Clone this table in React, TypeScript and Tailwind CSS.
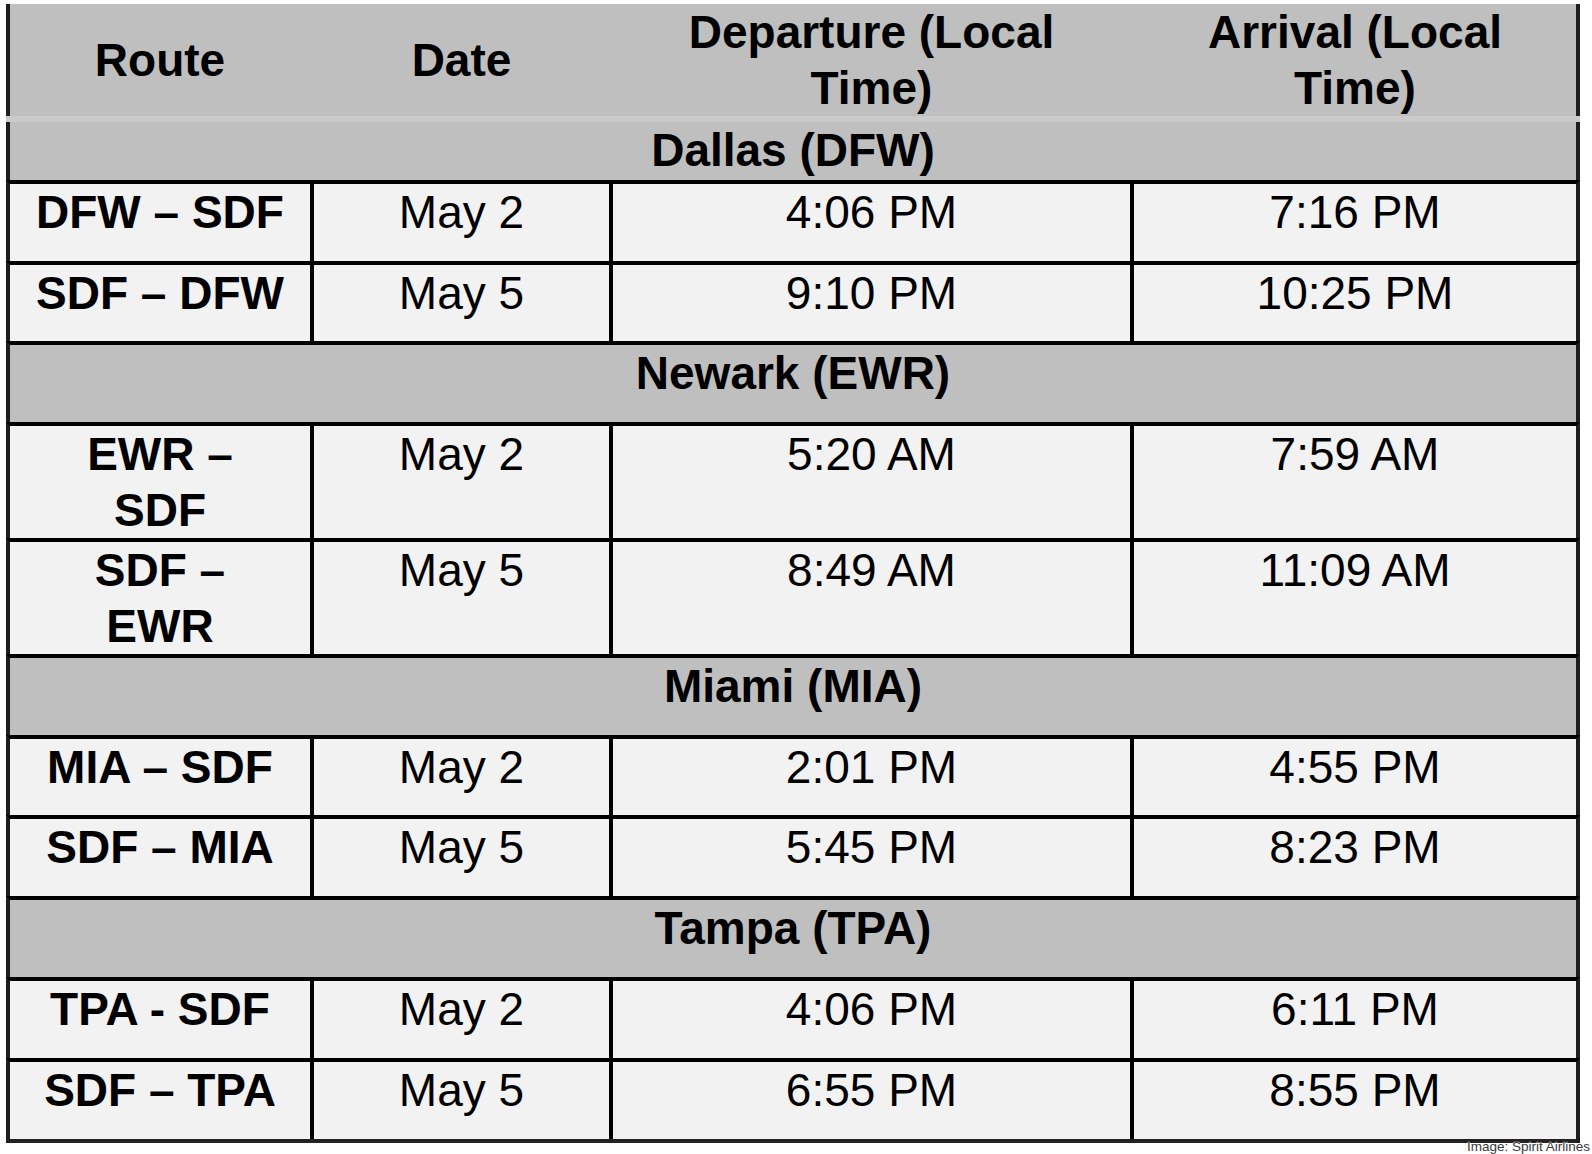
const rows: (
  | { kind: "group"; label: string; h: string }
  | { kind: "flight"; route: React.ReactNode; date: string; dep: string; arr: string; h: string }
)[] = [
  { kind: "flight", route: "DFW – SDF", date: "May 2", dep: "4:06 PM", arr: "7:16 PM", h: "h-[81px]" },
  { kind: "flight", route: "SDF – DFW", date: "May 5", dep: "9:10 PM", arr: "10:25 PM", h: "h-[80px]" },
  { kind: "group", label: "Newark (EWR)", h: "h-[81px]" },
  {
    kind: "flight",
    route: (
      <>
        EWR –<br />
        SDF
      </>
    ),
    date: "May 2",
    dep: "5:20 AM",
    arr: "7:59 AM",
    h: "h-[116px]",
  },
  {
    kind: "flight",
    route: (
      <>
        SDF –<br />
        EWR
      </>
    ),
    date: "May 5",
    dep: "8:49 AM",
    arr: "11:09 AM",
    h: "h-[116px]",
  },
  { kind: "group", label: "Miami (MIA)", h: "h-[81px]" },
  { kind: "flight", route: "MIA – SDF", date: "May 2", dep: "2:01 PM", arr: "4:55 PM", h: "h-[80px]" },
  { kind: "flight", route: "SDF – MIA", date: "May 5", dep: "5:45 PM", arr: "8:23 PM", h: "h-[81px]" },
  { kind: "group", label: "Tampa (TPA)", h: "h-[81px]" },
  { kind: "flight", route: "TPA - SDF", date: "May 2", dep: "4:06 PM", arr: "6:11 PM", h: "h-[81px]" },
  { kind: "flight", route: "SDF – TPA", date: "May 5", dep: "6:55 PM", arr: "8:55 PM", h: "h-[81px]" },
];

const cols = "grid grid-cols-[300px_295px_517px_442px] gap-x-[4px]";

export default function App() {
  return (
    <div className="relative w-[1592px] h-[1154px] bg-white text-black font-['Liberation_Sans',Arial,sans-serif] text-[46px] leading-[56px]">
      <div className="pt-[4px] pl-[6px] w-[1580px]">
        {/* header */}
        <div className={`${cols} h-[112px] bg-[#bfbfbf] border-x-4 border-[#1e1e1e] font-bold text-center`}>
          <div className="flex items-center justify-center">Route</div>
          <div className="flex items-center justify-center">Date</div>
          <div className="flex items-center justify-center">
            <span>
              Departure (Local
              <br />
              Time)
            </span>
          </div>
          <div className="flex items-center justify-center">
            <span>
              Arrival (Local
              <br />
              Time)
            </span>
          </div>
        </div>
        <div className="h-[6px] bg-[#cacaca]" />
        <div className="h-[58px] bg-[#bfbfbf] border-x-4 border-[#1e1e1e] font-bold text-center">
          Dallas (DFW)
        </div>

        {rows.map((row, i) =>
          row.kind === "group" ? (
            <div
              key={i}
              className={`${row.h} bg-[#bfbfbf] border-x-4 border-x-[#1e1e1e] border-t-4 border-t-black font-bold text-center`}
            >
              {row.label}
            </div>
          ) : (
            <div
              key={i}
              className={`${cols} ${row.h} bg-black border-x-4 border-x-[#1e1e1e] border-t-4 border-t-black text-center`}
            >
              <div className="bg-[#f2f2f2] font-bold">{row.route}</div>
              <div className="bg-[#f2f2f2]">{row.date}</div>
              <div className="bg-[#f2f2f2]">{row.dep}</div>
              <div className="bg-[#f2f2f2]">{row.arr}</div>
            </div>
          )
        )}
        <div className="h-[4px] bg-[#222] border-x-4 border-[#1e1e1e]" />
      </div>

      <div className="absolute right-[2px] top-[1140px] text-[13.5px] leading-[14px] text-[#3a3a3a] [text-shadow:0_0_1px_#fff,0_0_1px_#fff,0_0_1px_#fff]">
        Image: Spirit Airlines
      </div>
    </div>
  );
}
